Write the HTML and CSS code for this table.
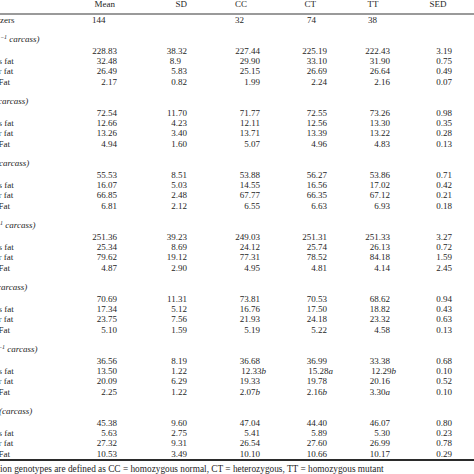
FILE: index.html
```html
<!DOCTYPE html>
<html>
<head>
<meta charset="utf-8">
<link rel="stylesheet" href="styles.css">
</head>
<body>
<div class="tbl">
  <div class="r hd">
    <span></span><span class="h-mean">Mean</span><span class="h-sd">SD</span><span class="h-cc">CC</span><span class="h-ct">CT</span><span class="h-tt">TT</span><span class="h-sed">SED</span>
  </div>
  <div class="r">
    <span>zers</span><span class="n-mean">144</span><span></span><span class="n-cc">32</span><span class="n-ct">74</span><span class="n-tt">38</span><span></span>
  </div>

  <div class="gh i1"><sup>−1</sup> carcass)</div>
  <div class="r"><span></span><span>228.83</span><span>38.32</span><span>227.44</span><span>225.19</span><span>222.43</span><span>3.19</span></div>
  <div class="r"><span class="l1">s fat</span><span>32.48</span><span class="short">8.9</span><span>29.90</span><span>33.10</span><span>31.90</span><span>0.75</span></div>
  <div class="r"><span class="l1">r fat</span><span>26.49</span><span>5.83</span><span>25.15</span><span>26.69</span><span>26.64</span><span>0.49</span></div>
  <div class="r"><span class="l2">Fat</span><span>2.17</span><span>0.82</span><span>1.99</span><span>2.24</span><span>2.16</span><span>0.07</span></div>

  <div class="gh i2">carcass)</div>
  <div class="r"><span></span><span>72.54</span><span>11.70</span><span>71.77</span><span>72.55</span><span>73.26</span><span>0.98</span></div>
  <div class="r"><span class="l1">s fat</span><span>12.66</span><span>4.23</span><span>12.11</span><span>12.56</span><span>13.30</span><span>0.35</span></div>
  <div class="r"><span class="l1">r fat</span><span>13.26</span><span>3.40</span><span>13.71</span><span>13.39</span><span>13.22</span><span>0.28</span></div>
  <div class="r"><span class="l2">Fat</span><span>4.94</span><span>1.60</span><span>5.07</span><span>4.96</span><span>4.83</span><span>0.13</span></div>

  <div class="gh i3">carcass)</div>
  <div class="r"><span></span><span>55.53</span><span>8.51</span><span>53.88</span><span>56.27</span><span>53.86</span><span>0.71</span></div>
  <div class="r"><span class="l1">s fat</span><span>16.07</span><span>5.03</span><span>14.55</span><span>16.56</span><span>17.02</span><span>0.42</span></div>
  <div class="r"><span class="l1">r fat</span><span>66.85</span><span>2.48</span><span>67.77</span><span>66.35</span><span>67.12</span><span>0.21</span></div>
  <div class="r"><span class="l2">Fat</span><span>6.81</span><span>2.12</span><span>6.55</span><span>6.63</span><span>6.93</span><span>0.18</span></div>

  <div class="gh i4"><sup>−1</sup> carcass)</div>
  <div class="r"><span></span><span>251.36</span><span>39.23</span><span>249.03</span><span>251.31</span><span>251.33</span><span>3.27</span></div>
  <div class="r"><span class="l1">s fat</span><span>25.34</span><span>8.69</span><span>24.12</span><span>25.74</span><span>26.13</span><span>0.72</span></div>
  <div class="r"><span class="l1">r fat</span><span>79.62</span><span>19.12</span><span>77.31</span><span>78.52</span><span>84.18</span><span>1.59</span></div>
  <div class="r"><span class="l2">Fat</span><span>4.87</span><span>2.90</span><span>4.95</span><span>4.81</span><span>4.14</span><span>2.45</span></div>

  <div class="gh i5">carcass)</div>
  <div class="r"><span></span><span>70.69</span><span>11.31</span><span>73.81</span><span>70.53</span><span>68.62</span><span>0.94</span></div>
  <div class="r"><span class="l1">s fat</span><span>17.34</span><span>5.12</span><span>16.76</span><span>17.50</span><span>18.82</span><span>0.43</span></div>
  <div class="r"><span class="l1">r fat</span><span>23.75</span><span>7.56</span><span>21.93</span><span>24.18</span><span>23.32</span><span>0.63</span></div>
  <div class="r"><span class="l2">Fat</span><span>5.10</span><span>1.59</span><span>5.19</span><span>5.22</span><span>4.58</span><span>0.13</span></div>

  <div class="gh i6"><sup>−1</sup> carcass)</div>
  <div class="r"><span></span><span>36.56</span><span>8.19</span><span>36.68</span><span>36.99</span><span>33.38</span><span>0.68</span></div>
  <div class="r"><span class="l1">s fat</span><span>13.50</span><span>1.22</span><span>12.33<i class="hang">b</i></span><span>15.28<i class="hang">a</i></span><span>12.29<i class="hang">b</i></span><span>0.10</span></div>
  <div class="r"><span class="l1">r fat</span><span>20.09</span><span>6.29</span><span>19.33</span><span>19.78</span><span>20.16</span><span>0.52</span></div>
  <div class="r"><span class="l2">Fat</span><span>2.25</span><span>1.22</span><span>2.07<i>b</i></span><span>2.16<i>b</i></span><span>3.30<i>a</i></span><span>0.10</span></div>

  <div class="gh i7">(carcass)</div>
  <div class="r"><span></span><span>45.38</span><span>9.60</span><span>47.04</span><span>44.40</span><span>46.07</span><span>0.80</span></div>
  <div class="r"><span class="l1">s fat</span><span>5.63</span><span>2.75</span><span>5.41</span><span>5.89</span><span>5.30</span><span>0.23</span></div>
  <div class="r"><span class="l1">r fat</span><span>27.32</span><span>9.31</span><span>26.54</span><span>27.60</span><span>26.99</span><span>0.78</span></div>
  <div class="r last"><span class="l2">Fat</span><span>10.53</span><span>3.49</span><span>10.10</span><span>10.66</span><span>10.17</span><span>0.29</span></div>

  <p class="note">ion genotypes are defined as CC = homozygous normal, CT = heterozygous, TT = homozygous mutant</p>
</div>
</body>
</html>
```

FILE: styles.css
```css
html, body {
  margin: 0;
  padding: 0;
  background: #ffffff;
}
body {
  width: 474px;
  height: 474px;
  overflow: hidden;
  font-family: "Liberation Serif", "Times New Roman", serif;
  font-size: 9px;
  color: #262626;
}
.tbl {
  display: flex;
  flex-direction: column;
}
.r {
  display: grid;
  grid-template-columns: 60px 57px 70px 73px 67px 63px 62px 22px;
  height: 10.333px;
  line-height: 10.333px;
  white-space: nowrap;
}
.r > span {
  text-align: right;
}
.r > span:first-child {
  text-align: left;
}
.hd {
  height: auto;
  line-height: 9px;
  padding-bottom: 3.8px;
  border-bottom: 2px solid #9a9a9a;
}
.h-mean { padding-right: 2px; }
.h-sd { padding-right: 0; }
.h-cc { padding-right: 13px; }
.h-ct { padding-right: 11px; }
.h-tt { padding-right: 11.5px; }
.h-sed { padding-right: 5.5px; }
.n-mean { padding-right: 11.5px; }
.n-cc { padding-right: 16px; }
.n-ct { padding-right: 11px; }
.n-tt { padding-right: 13px; }
.short { padding-right: 6px; }
.gh {
  margin-top: 10.333px;
  height: 10.333px;
  line-height: 8.333px;
  padding-bottom: 2px;
  box-sizing: border-box;
  font-style: italic;
  white-space: nowrap;
}
.gh sup {
  font-size: 6px;
  line-height: 0;
  vertical-align: 3px;
}
.i1 { text-indent: 0; }
.i2 { text-indent: -2px; }
.i3 { text-indent: -1px; }
.i4 { text-indent: -4px; }
.i5 { text-indent: -3px; }
.i6 { text-indent: -2px; }
.i7 { text-indent: -1px; }
.l1 { text-indent: -1.5px; }
.l2 { text-indent: -1.5px; }
.hang {
  margin-right: -6px;
}
.last {
  border-bottom: 2px solid #2b2b2b;
  box-sizing: content-box;
}
.note {
  margin: 2px 0 0;
  font-size: 9.3px;
  line-height: 12px;
  white-space: nowrap;
}
```
